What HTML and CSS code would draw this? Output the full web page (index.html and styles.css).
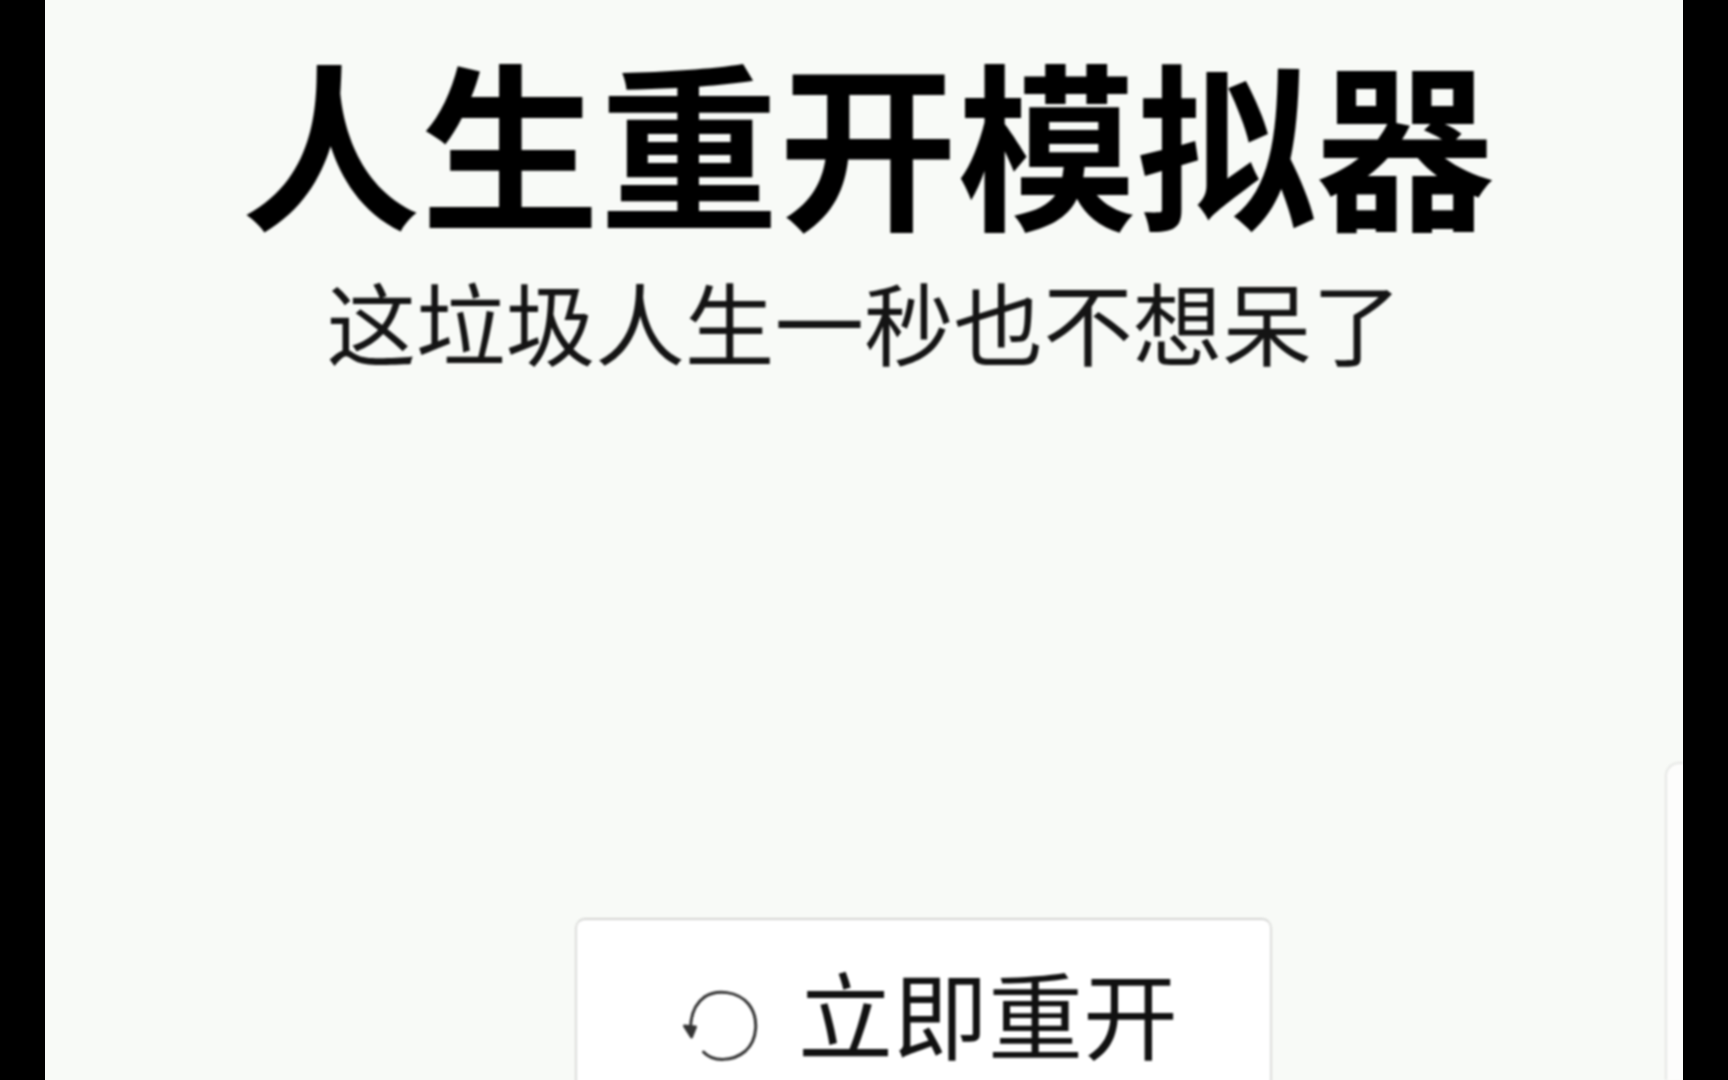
FILE: index.html
```html
<!DOCTYPE html>
<html lang="zh-CN">
<head>
    <meta charset="UTF-8">
    <meta name="viewport" content="width=device-width, initial-scale=1.0">
    <title>人生重开模拟器</title>
    <link rel="stylesheet" href="styles.css">
</head>
<body>
    <div class="screen">
        <div class="header">
            <h1>人生重开模拟器</h1>
            <p class="subtitle">这垃圾人生一秒也不想呆了</p>
        </div>

        <button class="btn-restart">
            <svg class="icon" viewBox="0 0 76 72" fill="none" stroke="#333" stroke-width="3" stroke-linecap="round" stroke-linejoin="round">
                <path d="M22 7 C34 -1 55 1 66 14 C77 28 75 50 63 61 C50 72 30 72 21 62"/>
                <path d="M22 7 C12 14 8 24 8 40"/>
                <path d="M2 36 L9 47 L13 37 Z" fill="#333"/>
            </svg>
            <span>立即重开</span>
        </button>

        <div class="side-tab"></div>
    </div>
</body>
</html>
```

FILE: styles.css
```css
* {
    margin: 0;
    padding: 0;
    box-sizing: border-box;
}

html, body {
    height: 100%;
    overflow: hidden;
}

body {
    background: #000000;
    font-family: "Noto Sans CJK SC", "Noto Sans", sans-serif;
    padding: 0 45px;
}

.screen {
    position: relative;
    height: 1080px;
    background: #f8faf7;
    overflow: hidden;
}

.header {
    text-align: center;
    padding-top: 28px;
    filter: blur(0.8px);
}

.header h1 {
    font-size: 179px;
    line-height: 222px;
    font-weight: 700;
    color: #000000;
    padding-left: 8px;
}

.header .subtitle {
    font-size: 89.6px;
    line-height: 100px;
    font-weight: 400;
    color: #141414;
    margin-top: 20px;
}

.btn-restart {
    display: flex;
    align-items: flex-start;
    gap: 39px;
    width: 697px;
    height: 200px;
    margin: 548px 0 0 530px;
    padding: 42px 0 0 105px;
    background: #ffffff;
    border: 2px solid #dcdddb;
    border-top-color: #d4d5d3;
    border-radius: 10px;
    font-family: inherit;
    font-size: 95px;
    line-height: 100px;
    color: #111111;
    filter: blur(0.8px);
}

.btn-restart .icon {
    width: 77px;
    height: 72px;
    margin-top: 28px;
    flex-shrink: 0;
}

.side-tab {
    position: absolute;
    top: 762px;
    right: 0;
    width: 18px;
    bottom: 0;
    background: #fdfdfc;
    border: 2px solid #e6e7e5;
    border-right: none;
    border-bottom: none;
    border-top-left-radius: 14px;
    filter: blur(0.8px);
}
```
